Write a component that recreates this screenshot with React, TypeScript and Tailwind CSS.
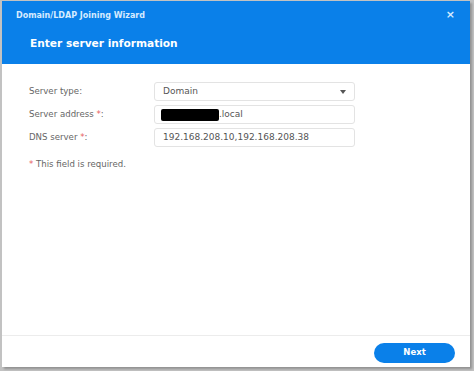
import React from 'react';

const Field: React.FC<{ label: string; required?: boolean; children: React.ReactNode }> = ({ label, required, children }) => (
    <div className="flex items-center h-[19px]">
        <div className="w-[125px] text-[8.6px] text-[#666]">
            {label}
            {required && <span className="text-[#e86060]"> *</span>}:
        </div>
        <div className="w-[201px] h-[19px] border border-[#e3e3e3] rounded-[3px] bg-white flex items-center px-[8px] text-[9px] text-[#555]">
            {children}
        </div>
    </div>
);

const App: React.FC = () => {
    return (
        <div className="w-[474px] h-[371px] bg-[#c2c2c2] pl-[2px] pt-[1px] overflow-hidden" style={{ fontFamily: '"DejaVu Sans", Verdana, sans-serif' }}>
            <div className="w-[468px] h-[366px] bg-white flex flex-col shadow-[2px_2px_2px_rgba(0,0,0,0.25)]">
                {/* Header */}
                <div className="h-[63px] bg-[#0a80e9] relative">
                    <div className="absolute left-[14px] top-[9px] text-[8px] font-bold text-[#d6ebff]">Domain/LDAP Joining Wizard</div>
                    <div className="absolute right-[15px] top-[6px] text-[11px] font-bold text-[#d6ebff]">×</div>
                    <div className="absolute left-[28px] top-[35px] text-[10.6px] font-bold text-white">Enter server information</div>
                </div>

                {/* Body */}
                <div className="flex-1 pl-[27px] pt-[18px] flex flex-col gap-[4px]">
                    <Field label="Server type">
                        <span className="flex-1">Domain</span>
                        <span className="w-0 h-0 border-l-[3.5px] border-r-[3.5px] border-t-[4px] border-l-transparent border-r-transparent border-t-[#555]" />
                    </Field>
                    <Field label="Server address" required>
                        <span className="inline-block w-[58px] h-[12px] bg-black rounded-[2px] -ml-[2px] blur-[0.5px]" />
                        <span>.local</span>
                    </Field>
                    <Field label="DNS server" required>
                        <span>192.168.208.10,192.168.208.38</span>
                    </Field>
                    <div className="mt-[7px] text-[8.6px] text-[#666]">
                        <span className="text-[#e86060]">*</span> This field is required.
                    </div>
                </div>

                {/* Footer */}
                <div className="h-[32px] border-t border-[#ececec] flex items-center justify-end pr-[15px]">
                    <button className="w-[81px] h-[20px] mt-[2px] rounded-full bg-[#0a80e9] text-white text-[8.5px] font-bold">Next</button>
                </div>
            </div>
        </div>
    );
};

export default App;
